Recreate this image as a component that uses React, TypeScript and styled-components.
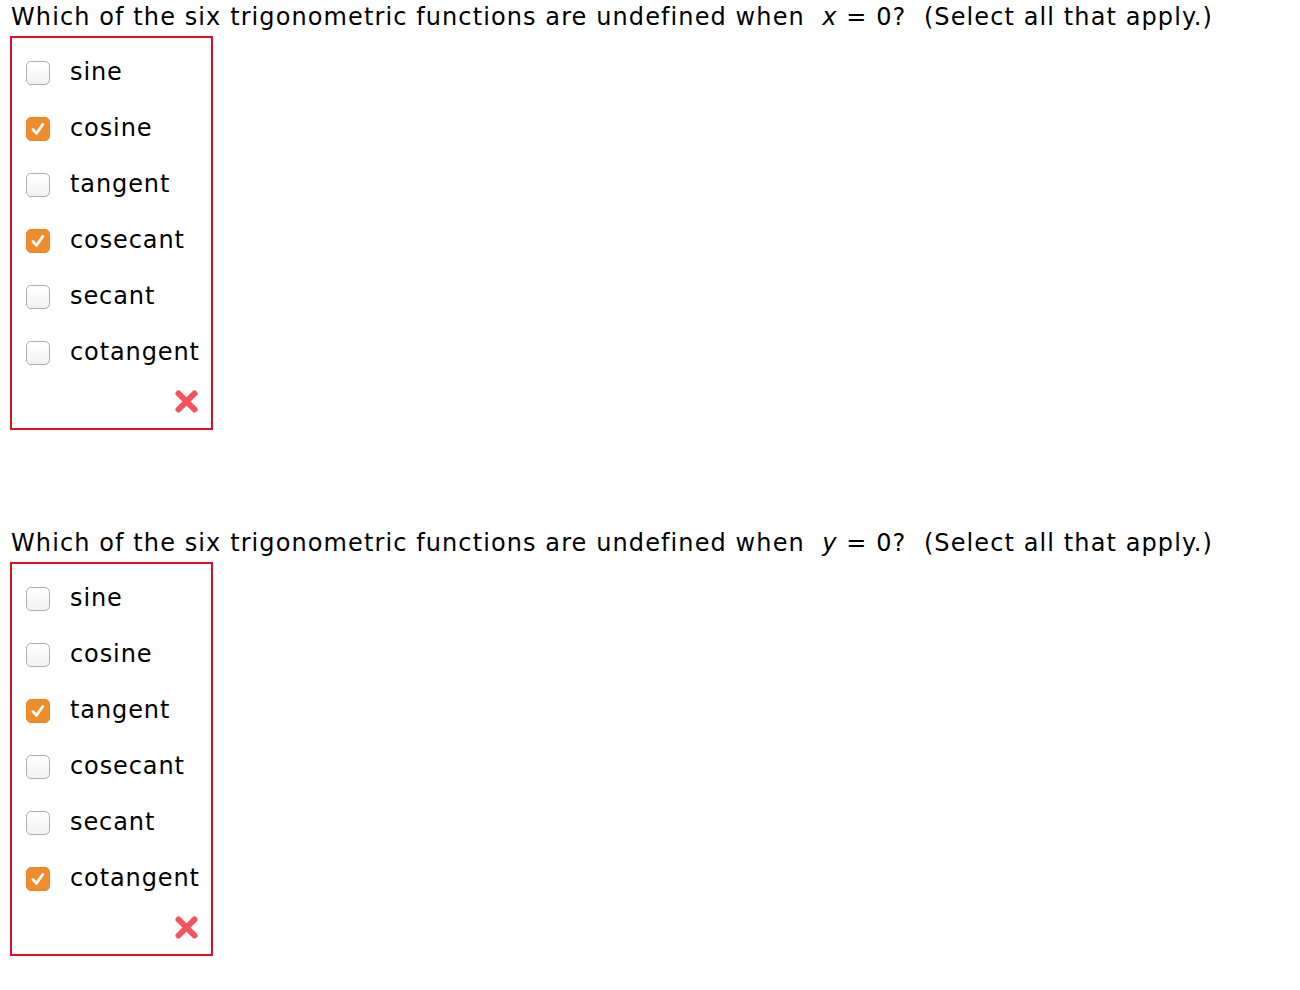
import styled, { createGlobalStyle } from "styled-components"

const GlobalStyle = createGlobalStyle`
  body {
    margin: 0;
    background: #fff;
    font-family: "DejaVu Sans", Verdana, sans-serif;
    color: #000;
  }
`

const Page = styled.div`
  padding: 0 0 0 10px;
`

const Question = styled.section`
  margin-bottom: 96px;

  &:last-child {
    margin-bottom: 0;
  }
`

const Prompt = styled.p`
  margin: 0 0 2px 1px;
  font-size: 24px;
  line-height: 34px;
  letter-spacing: 1.1px;
  white-space: pre;
`

const Var = styled.i`
  font-style: italic;
`

const AnswerBox = styled.div`
  border: 2px solid #de1220;
  padding: 23px 12px 14px 14px;
  display: flex;
  flex-direction: column;
  gap: 32px;
  width: 173px;
`

const Row = styled.label`
  display: flex;
  align-items: center;
  gap: 20px;
  height: 24px;
  font-size: 24px;
  letter-spacing: 0.9px;
  cursor: pointer;
`

const Label = styled.span`
  position: relative;
  top: -1px;
`

const Box = styled.span<{ $checked: boolean }>`
  width: 24px;
  height: 24px;
  flex: none;
  box-sizing: border-box;
  border-radius: 5px;
  display: flex;
  align-items: center;
  justify-content: center;
  border: 1px solid ${p => (p.$checked ? "#e8862a" : "#adadad")};
  background: ${p => (p.$checked ? "#ef8d2c" : "linear-gradient(#fff, #f2f2f2)")};
`

const Mark = styled.div`
  align-self: flex-end;
  width: 25px;
  height: 25px;
  margin-top: -8px;
  filter: blur(0.7px);
`

function Check() {
  return (
    <svg width="18" height="18" viewBox="0 0 16 16">
      <path d="M3.6 8.6 L6.7 11.8 L12.2 4" fill="none" stroke="#fff" strokeWidth="2.6" strokeLinecap="round" strokeLinejoin="round" />
    </svg>
  )
}

function Cross() {
  return (
    <svg width="25" height="25" viewBox="0 0 25 25">
      <path d="M4.5 4.5 L20.5 20.5 M20.5 4.5 L4.5 20.5" stroke="#f5525d" strokeWidth="6" strokeLinecap="round" />
    </svg>
  )
}

const options = ["sine", "cosine", "tangent", "cosecant", "secant", "cotangent"]

interface QuestionBlockProps {
  variable: string
  checked: string[]
}

function QuestionBlock({ variable, checked }: Readonly<QuestionBlockProps>) {
  return (
    <Question>
      <Prompt>
        Which of the six trigonometric functions are undefined when  <Var>{variable}</Var> = 0?  (Select all that apply.)
      </Prompt>
      <AnswerBox>
        {options.map(o => {
          const on = checked.includes(o)
          return (
            <Row key={o}>
              <Box $checked={on}>{on && <Check />}</Box>
              <Label>{o}</Label>
            </Row>
          )
        })}
        <Mark>
          <Cross />
        </Mark>
      </AnswerBox>
    </Question>
  )
}

export default function App() {
  return (
    <Page>
      <GlobalStyle />
      <QuestionBlock variable="x" checked={["cosine", "cosecant"]} />
      <QuestionBlock variable="y" checked={["tangent", "cotangent"]} />
    </Page>
  )
}
